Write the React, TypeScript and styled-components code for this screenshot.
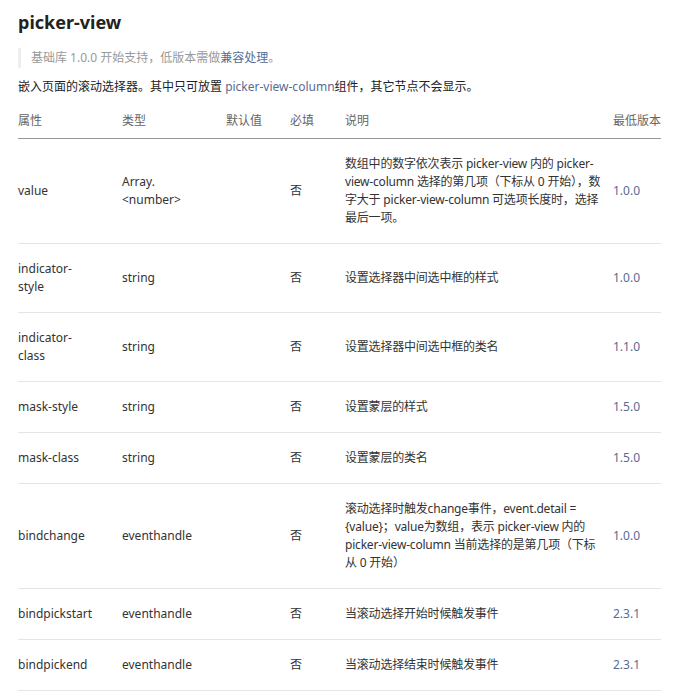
import styled, { createGlobalStyle } from 'styled-components';

const Global = createGlobalStyle`
  body {
    margin: 0;
    background: #fff;
    font-family: "Microsoft YaHei", "Noto Sans", "Noto Sans CJK SC", sans-serif;
    color: #333;
  }
`;

const Page = styled.div`
  padding: 8px 35px 0 18px;
  font-size: 12px;
`;

const Title = styled.h1`
  margin: 0 0 12px;
  font-size: 18px;
  line-height: 28px;
  font-weight: bold;
  color: #222;
`;

const Quote = styled.blockquote`
  margin: 0 0 10px;
  padding: 2px 0 2px 10px;
  border-left: 3px solid #eee;
  color: #999;
  line-height: 16px;
`;

const Link = styled.span`
  color: #576b95;
`;

const Intro = styled.p`
  margin: 0 0 8px;
  line-height: 18px;
  color: #222;
`;

const Table = styled.table`
  width: 100%;
  border-collapse: collapse;
  line-height: 18px;
`;

const Th = styled.th<{ w?: number }>`
  text-align: left;
  font-weight: normal;
  white-space: nowrap;
  color: #666;
  padding: 8px 0;
  border-bottom: 1px solid #999;
  width: ${({ w }) => (w ? `${w}px` : 'auto')};
`;

const Td = styled.td<{ version?: boolean }>`
  padding: 16px 0;
  border-bottom: 1px solid #e5e5e5;
  color: ${({ version }) => (version ? '#576b95' : '#333')};
  vertical-align: middle;
`;

const Desc = styled.div`
  max-width: 258px;
  letter-spacing: -0.2px;
`;

const Multi = styled.span`
  white-space: pre-line;
`;

const rows = [
  ['value', 'Array.\n<number>', '数组中的数字依次表示 picker-view 内的 picker-view-column 选择的第几项（下标从 0 开始），数字大于 picker-view-column 可选项长度时，选择最后一项。', '1.0.0'],
  ['indicator-\nstyle', 'string', '设置选择器中间选中框的样式', '1.0.0'],
  ['indicator-\nclass', 'string', '设置选择器中间选中框的类名', '1.1.0'],
  ['mask-style', 'string', '设置蒙层的样式', '1.5.0'],
  ['mask-class', 'string', '设置蒙层的类名', '1.5.0'],
  ['bindchange', 'eventhandle', '滚动选择时触发change事件，event.detail = {value}；value为数组，表示 picker-view 内的 picker-view-column 当前选择的是第几项（下标从 0 开始）', '1.0.0'],
  ['bindpickstart', 'eventhandle', '当滚动选择开始时候触发事件', '2.3.1'],
  ['bindpickend', 'eventhandle', '当滚动选择结束时候触发事件', '2.3.1'],
];

export default function App() {
  return (
    <Page>
      <Global />
      <Title>picker-view</Title>
      <Quote>
        基础库 1.0.0 开始支持，低版本需做<Link>兼容处理</Link>。
      </Quote>
      <Intro>
        嵌入页面的滚动选择器。其中只可放置 <Link>picker-view-column</Link>组件，其它节点不会显示。
      </Intro>
      <Table>
        <thead>
          <tr>
            <Th w={104}>属性</Th>
            <Th w={104}>类型</Th>
            <Th w={64}>默认值</Th>
            <Th w={55}>必填</Th>
            <Th>说明</Th>
            <Th w={44}>最低版本</Th>
          </tr>
        </thead>
        <tbody>
          {rows.map(([name, type, desc, ver]) => (
            <tr key={name}>
              <Td><Multi>{name}</Multi></Td>
              <Td><Multi>{type}</Multi></Td>
              <Td></Td>
              <Td>否</Td>
              <Td><Desc>{desc}</Desc></Td>
              <Td version>{ver}</Td>
            </tr>
          ))}
        </tbody>
      </Table>
    </Page>
  );
}
